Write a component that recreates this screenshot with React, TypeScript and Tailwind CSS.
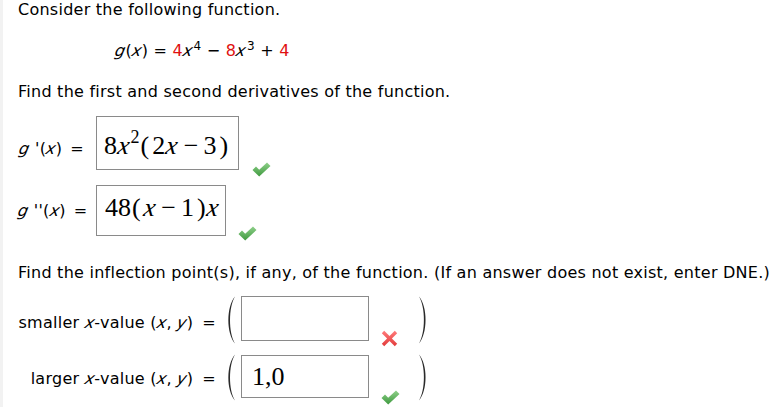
import React from "react";

const Check = ({ className = "" }: { className?: string }) => (
  <svg width="19" height="15" viewBox="0 0 19 15" className={className}>
    <defs>
      <linearGradient id="ck" x1="0" y1="0" x2="0" y2="1">
        <stop offset="0" stopColor="#8fd08a" />
        <stop offset="1" stopColor="#3f9a3f" />
      </linearGradient>
    </defs>
    <polygon points="0.5,8 4,4.5 7.2,7.7 15,0.5 18.5,4 7.2,14.5" fill="url(#ck)" />
  </svg>
);

const Cross = ({ className = "" }: { className?: string }) => (
  <svg width="17" height="17" viewBox="0 0 17 17" className={className}>
    <defs>
      <linearGradient id="cr" x1="0" y1="0" x2="0" y2="1">
        <stop offset="0" stopColor="#ff7b7b" />
        <stop offset="1" stopColor="#e23b3b" />
      </linearGradient>
    </defs>
    <path
      d="M3.2 0.8 L8.5 6.1 L13.8 0.8 L16.2 3.2 L10.9 8.5 L16.2 13.8 L13.8 16.2 L8.5 10.9 L3.2 16.2 L0.8 13.8 L6.1 8.5 L0.8 3.2 Z"
      fill="url(#cr)"
    />
  </svg>
);

const Paren = ({ right = false, h = 48 }: { right?: boolean; h?: number }) => (
  <svg width="12" height={h} viewBox={`0 0 12 ${h}`} className={right ? "-scale-x-100" : ""}>
    <path
      d={`M11 0.5 C2.2 ${h * 0.22}, 2.2 ${h * 0.78}, 11 ${h - 0.5} C4.4 ${h * 0.76}, 4.4 ${h * 0.24}, 11 0.5 Z`}
      fill="#2a2a2a"
    />
  </svg>
);

// slanted letter (the installed fonts give no italic face here)
const I = ({ children }: { children: React.ReactNode }) => (
  <span className="inline-block -skew-x-12 italic">{children}</span>
);
const Red = ({ children }: { children: React.ReactNode }) => (
  <span className="text-[#e01010]">{children}</span>
);
const Mx = () => <span className="mx-[1px] inline-block -skew-x-[9deg] italic">x</span>;

const MathBox = ({
  children,
  className = "",
}: {
  children: React.ReactNode;
  className?: string;
}) => (
  <div
    className={`border border-[#8a8a8a] bg-white font-['Liberation_Serif',serif] text-[26px] leading-[26px] tracking-normal text-black ${className}`}
  >
    {children}
  </div>
);

export default function App() {
  return (
    <div className="flex min-h-screen bg-white font-['DejaVu_Sans',Verdana,sans-serif] text-[16px] leading-[18px] tracking-[0.25px] text-black">
      <div className="w-[3px] shrink-0 bg-[#f2f2f2]" />
      <div className="pl-[15px] pt-[1px]">
        <p>Consider the following function.</p>

        <p className="mt-[23px] pl-[97px]">
          <I>g</I>(<I>x</I>) = <Red>4</Red>
          <I>x</I>
          <sup className="ml-[1px] text-[12px]">4</sup> − <Red>8</Red>
          <I>x</I>
          <sup className="ml-[1px] text-[12px]">3</sup> + <Red>4</Red>
        </p>

        <p className="mt-[23px]">Find the first and second derivatives of the function.</p>

        <div className="mt-[15px] flex items-baseline">
          <div className="w-[66px] shrink-0 whitespace-nowrap text-right">
            <I>g</I> '(<I>x</I>)<span className="ml-[8px]">=</span>
          </div>
          <div className="ml-[12px] flex items-end">
            <MathBox className="pl-[7px] pr-[10px] pt-[16px] pb-[10px]">
              8<Mx />
              <sup className="-top-[11px] text-[18px]">2</sup>
              <span className="ml-[1px]">(</span>
              <span className="ml-[3px]">2</span>
              <Mx />
              <span className="mx-[5px]">−</span>3<span className="ml-[3px]">)</span>
            </MathBox>
            <Check className="-mb-[7px] ml-[13px]" />
          </div>
        </div>

        <div className="mt-[15px] flex items-baseline">
          <div className="w-[66px] shrink-0 whitespace-nowrap text-right">
            <I>g</I> ''(<I>x</I>)<span className="ml-[8px]">=</span>
          </div>
          <div className="ml-[12px] flex items-end">
            <MathBox className="pl-[8px] pr-[6px] pt-[9px] pb-[14px]">
              48<span className="ml-[1px]">(</span>
              <span className="ml-[2px]">
                <Mx />
              </span>
              <span className="mx-[5px]">−</span>1<span className="ml-[3px]">)</span>
              <Mx />
            </MathBox>
            <Check className="-mb-[5px] ml-[12px]" />
          </div>
        </div>

        <p className="mt-[28px] whitespace-nowrap">
          Find the inflection point(s), if any, of the function. (If an answer does not exist, enter DNE.)
        </p>

        <div className="mt-[14px] flex items-start">
          <div className="mt-[18px] w-[198px] shrink-0 whitespace-nowrap text-right">
            smaller <I>x</I>-value (<I>x</I>, <I>y</I>)<span className="ml-[9px]">=</span>
          </div>
          <div className="ml-[8px] flex items-start">
            <Paren h={48} />
            <div className="ml-[5px] flex items-end">
              <div className="h-[45px] w-[128px] border border-[#8a8a8a] bg-white" />
              <Cross className="-mb-[6px] ml-[12px]" />
            </div>
            <div className="ml-[20px]">
              <Paren right h={48} />
            </div>
          </div>
        </div>

        <div className="mt-[10px] flex items-start">
          <div className="mt-[16px] w-[198px] shrink-0 whitespace-nowrap text-right">
            larger <I>x</I>-value (<I>x</I>, <I>y</I>)<span className="ml-[9px]">=</span>
          </div>
          <div className="ml-[8px] flex items-start">
            <Paren h={47} />
            <div className="mt-[1px] ml-[5px] flex items-end">
              <div className="h-[43px] w-[128px] border border-[#8a8a8a] bg-white pl-[10px] pt-[8px] font-['Liberation_Serif',serif] text-[26px] leading-[26px] tracking-normal">
                1,0
              </div>
              <Check className="-mb-[7px] ml-[12px]" />
            </div>
            <div className="ml-[18px]">
              <Paren right h={47} />
            </div>
          </div>
        </div>
      </div>
    </div>
  );
}
